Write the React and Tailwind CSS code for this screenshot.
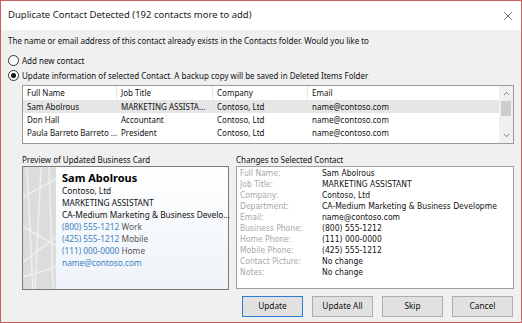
import { X, ChevronUp, ChevronDown } from 'lucide-react'

const rows = [
  { name: 'Sam Abolrous', title: 'MARKETING ASSISTA...', company: 'Contoso, Ltd', email: 'name@contoso.com', selected: true },
  { name: 'Don Hall', title: 'Accountant', company: 'Contoso, Ltd', email: 'name@contoso.com' },
  { name: 'Paula Barreto Barreto ...', title: 'President', company: 'Contoso, Ltd', email: 'name@contoso.com' },
]

const changes = [
  ['Full Name:', 'Sam Abolrous'],
  ['Job Title:', 'MARKETING ASSISTANT'],
  ['Company:', 'Contoso, Ltd'],
  ['Department:', 'CA-Medium Marketing & Business Developme'],
  ['Email:', 'name@contoso.com'],
  ['Business Phone:', '(800) 555-1212'],
  ['Home Phone:', '(111) 000-0000'],
  ['Mobile Phone:', '(425) 555-1212'],
  ['Contact Picture:', 'No change'],
  ['Notes:', 'No change'],
]

function Radio({ checked, label }) {
  return (
    <div className="flex items-center gap-[3px] h-[15px]">
      <span className="w-[11px] h-[11px] rounded-full border border-[#333] bg-white flex items-center justify-center">
        {checked && <span className="w-[5px] h-[5px] rounded-full bg-[#111]" />}
      </span>
      <span>{label}</span>
    </div>
  )
}

function CardStripe() {
  return (
    <svg width="33" height="122" viewBox="0 0 33 122" className="block shrink-0">
      <rect width="33" height="122" fill="#dcdcdc" />
      <g stroke="#f2f2f2" strokeWidth="1.5" fill="none" opacity="0.9">
        <path d="M4 0 L10 122" />
        <path d="M18 0 L12 122" />
        <path d="M0 30 L33 12" />
        <path d="M0 60 L33 78" />
        <path d="M0 95 L33 70" />
        <path d="M26 0 L30 122" />
        <path d="M0 110 L33 100" />
      </g>
    </svg>
  )
}

export default function App() {
  return (
    <div
      className="w-[522px] h-[323px] border border-[#c8605e] bg-[#f0f0f0] text-[8px] text-[#111] flex flex-col overflow-hidden"
      style={{ fontFamily: '"Noto Sans", "Open Sans", sans-serif' }}
    >
      {/* Title bar */}
      <div className="h-[29px] bg-white flex items-center justify-between pl-[7px] pr-[6px] shrink-0">
        <span className="text-[9.5px] text-[#222]">Duplicate Contact Detected (192 contacts more to add)</span>
        <X className="w-[14px] h-[14px] text-[#333]" strokeWidth={1.2} />
      </div>

      <div className="flex flex-col px-[7px] pt-[3px]">
        <div className="h-[16px] flex items-center">
          The name or email address of this contact already exists in the Contacts folder. Would you like to
        </div>
        <div className="mt-[4px] flex flex-col">
          <Radio label="Add new contact" />
          <Radio checked label="Update information of selected Contact. A backup copy will be saved in Deleted Items Folder" />
        </div>

        {/* Contacts list */}
        <div className="ml-[14px] mt-[2px] h-[59px] border border-[#9a9a9a] bg-white flex">
          <div className="flex-1 flex flex-col">
            <div className="h-[14px] grid grid-cols-[94px_96px_95px_1fr] items-center">
              {['Full Name', 'Job Title', 'Company', 'Email'].map((h, i) => (
                <div key={h} className={`pl-[4px] h-full flex items-center ${i < 3 ? 'border-r border-[#e5e5e5]' : ''}`}>{h}</div>
              ))}
            </div>
            {rows.map((r) => (
              <div
                key={r.name}
                className={`h-[13px] grid grid-cols-[94px_96px_95px_1fr] items-center ${r.selected ? 'bg-[#e6e6e6]' : ''}`}
              >
                <div className="pl-[4px] whitespace-nowrap">{r.name}</div>
                <div className="pl-[4px] whitespace-nowrap">{r.title}</div>
                <div className="pl-[4px]">{r.company}</div>
                <div className="pl-[4px]">{r.email}</div>
              </div>
            ))}
          </div>
          <div className="w-[14px] bg-[#f0f0f0] flex flex-col items-center">
            <ChevronUp className="w-[9px] h-[9px] mt-[3px] text-[#555]" strokeWidth={2} />
            <div className="w-[10px] h-[15px] bg-[#cdcdcd] mt-[3px]" />
            <div className="flex-1" />
            <ChevronDown className="w-[9px] h-[9px] mb-[3px] text-[#555]" strokeWidth={2} />
          </div>
        </div>

        {/* Preview and changes */}
        <div className="ml-[14px] mt-[9px] flex gap-[7px]">
          <div className="w-[207px] flex flex-col">
            <div className="h-[13px] flex items-center">Preview of Updated Business Card</div>
            <div className="h-[124px] border border-[#7a7a7a] flex bg-gradient-to-b from-white to-[#eef3f9]">
              <CardStripe />
              <div className="pl-[6px] pt-[4px] flex flex-col leading-[12px] whitespace-nowrap text-[8.3px]">
                <div className="text-[11px] font-bold leading-[14px] text-black">Sam Abolrous</div>
                <div>Contoso, Ltd</div>
                <div>MARKETING ASSISTANT</div>
                <div>CA-Medium Marketing &amp; Business Develo...</div>
                <div><span className="text-[#3b82c4]">(800) 555-1212</span> <span className="text-[#555]">Work</span></div>
                <div><span className="text-[#3b82c4]">(425) 555-1212</span> <span className="text-[#555]">Mobile</span></div>
                <div><span className="text-[#3b82c4]">(111) 000-0000</span> <span className="text-[#555]">Home</span></div>
                <div className="text-[#3b82c4]">name@contoso.com</div>
              </div>
            </div>
          </div>

          <div className="flex-1 flex flex-col">
            <div className="h-[13px] flex items-center">Changes to Selected Contact</div>
            <div
              className="h-[123px] border border-[#a0a0a0] bg-white pl-[3px] pt-[1px] flex flex-col leading-[11px] text-[8.5px]"
              style={{ fontFamily: '"DejaVu Sans Condensed", "Liberation Sans", sans-serif' }}
            >
              {changes.map(([k, v]) => (
                <div key={k} className="flex whitespace-nowrap">
                  <span className="w-[82px] text-[#a8a8a8]">{k}</span>
                  <span className="text-[#111]">{v}</span>
                </div>
              ))}
            </div>
          </div>
        </div>

        {/* Buttons */}
        <div className="mt-[6px] pr-[1px] flex justify-end gap-[9px]">
          {['Update', 'Update All', 'Skip', 'Cancel'].map((b, i) => (
            <button
              key={b}
              className={`w-[61px] h-[21px] bg-[#e1e1e1] border ${i === 0 ? 'border-[#2b7cd3]' : 'border-[#adadad]'} text-[8.3px]`}
            >
              {b}
            </button>
          ))}
        </div>
      </div>
    </div>
  )
}
